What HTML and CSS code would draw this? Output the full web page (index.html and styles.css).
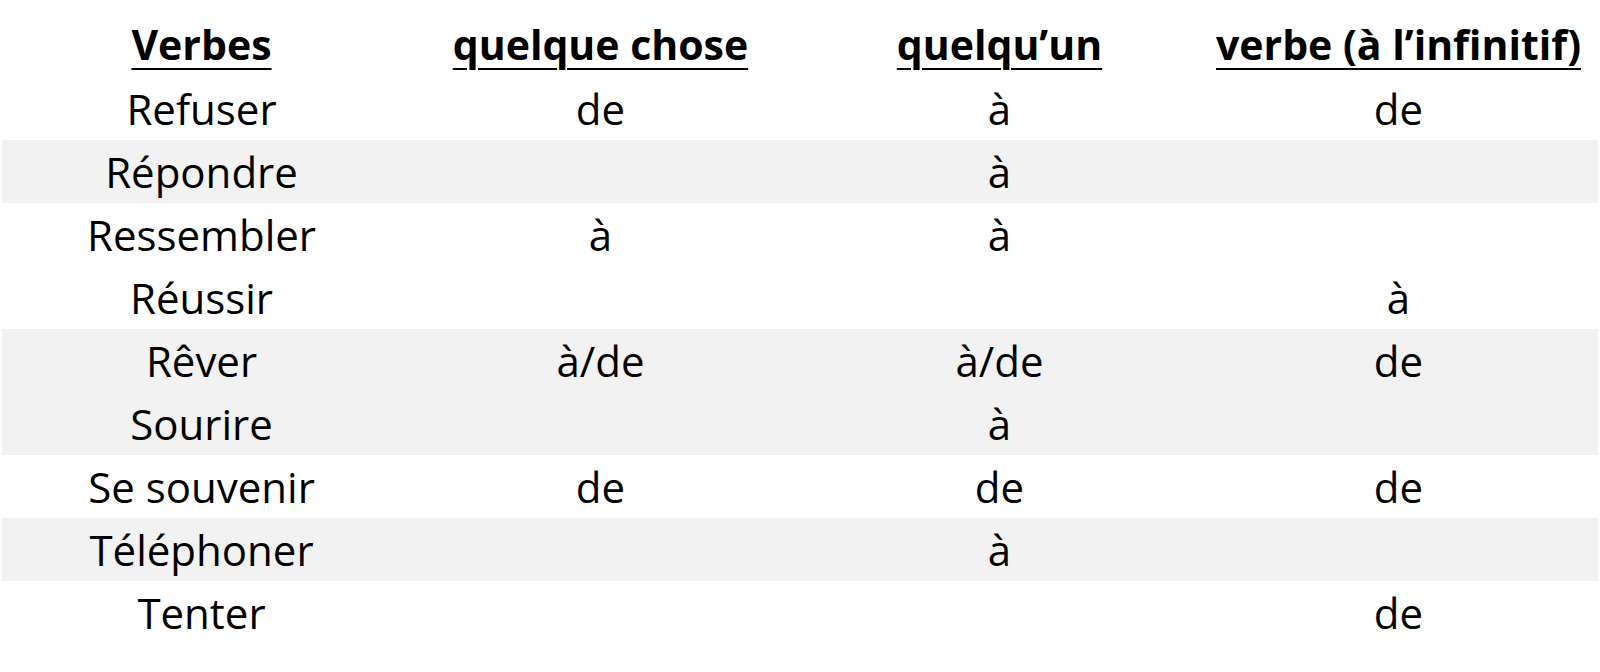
FILE: index.html
```html
<!DOCTYPE html>
<html lang="fr">
<head>
<meta charset="utf-8">
<title>Verbes et prépositions</title>
<link rel="stylesheet" href="styles.css">
</head>
<body>
<div class="table">
  <div class="row head">
    <div class="cell"><span class="u">Verbes</span></div>
    <div class="cell"><span class="u">quelque chose</span></div>
    <div class="cell"><span class="u">quelqu’un</span></div>
    <div class="cell"><span class="u">verbe (à l’infinitif)</span></div>
  </div>
  <div class="row">
    <div class="cell">Refuser</div><div class="cell">de</div><div class="cell">à</div><div class="cell">de</div>
  </div>
  <div class="row shade">
    <div class="cell">Répondre</div><div class="cell"></div><div class="cell">à</div><div class="cell"></div>
  </div>
  <div class="row">
    <div class="cell">Ressembler</div><div class="cell">à</div><div class="cell">à</div><div class="cell"></div>
  </div>
  <div class="row">
    <div class="cell">Réussir</div><div class="cell"></div><div class="cell"></div><div class="cell">à</div>
  </div>
  <div class="row shade">
    <div class="cell">Rêver</div><div class="cell">à/de</div><div class="cell">à/de</div><div class="cell">de</div>
  </div>
  <div class="row shade">
    <div class="cell">Sourire</div><div class="cell"></div><div class="cell">à</div><div class="cell"></div>
  </div>
  <div class="row">
    <div class="cell">Se souvenir</div><div class="cell">de</div><div class="cell">de</div><div class="cell">de</div>
  </div>
  <div class="row shade">
    <div class="cell">Téléphoner</div><div class="cell"></div><div class="cell">à</div><div class="cell"></div>
  </div>
  <div class="row">
    <div class="cell">Tenter</div><div class="cell"></div><div class="cell"></div><div class="cell">de</div>
  </div>
</div>
</body>
</html>
```
FILE: styles.css
```css
html, body {
  margin: 0;
  padding: 0;
  background: #ffffff;
}
body {
  width: 1600px;
  height: 672px;
  overflow: hidden;
  font-family: "Open Sans", "Liberation Sans", sans-serif;
  color: #000000;
}
.table {
  padding-top: 14px;
  padding-left: 2px;
  width: 1596px;
}
.row {
  display: grid;
  grid-template-columns: repeat(4, 1fr);
  height: 63px;
}
.row.shade {
  background: #f2f2f2;
}
.cell {
  font-size: 42px;
  line-height: 63px;
  text-align: center;
  white-space: nowrap;
}
.head .cell {
  font-size: 41px;
  line-height: 60px;
  font-weight: 700;
}
.u {
  text-decoration: underline;
  text-decoration-thickness: 2px;
  text-underline-offset: 8px;
}
```
